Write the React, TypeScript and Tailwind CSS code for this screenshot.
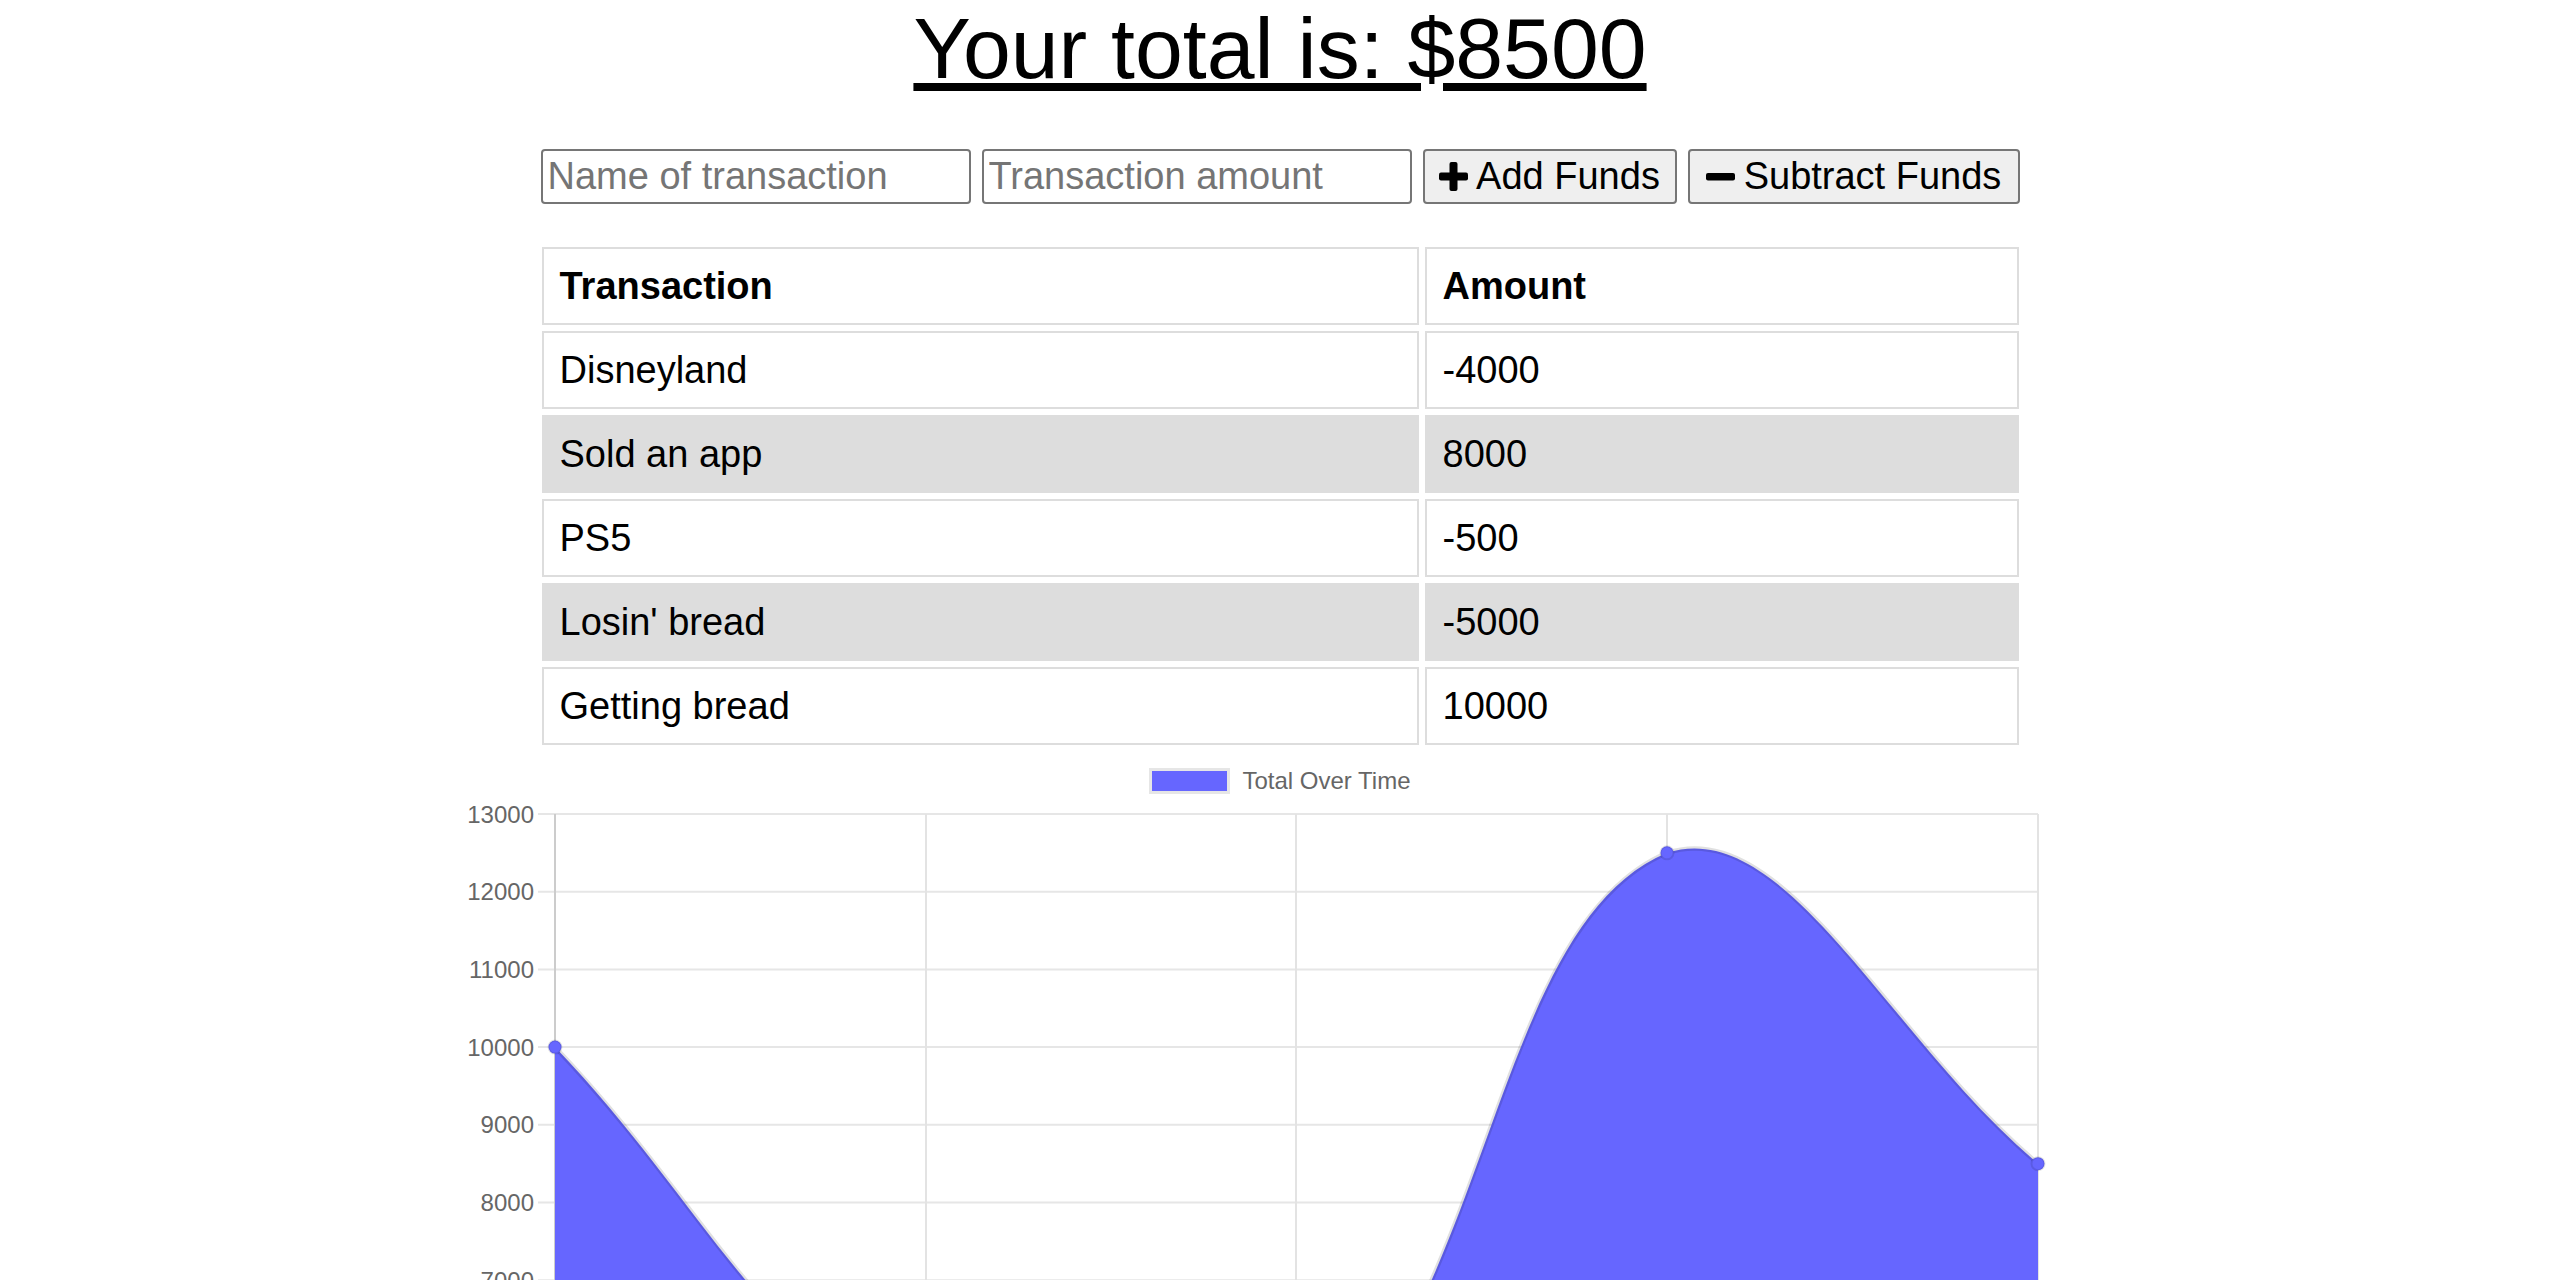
import React from 'react';

const transactions = [
  { name: 'Disneyland', value: -4000 },
  { name: 'Sold an app', value: 8000 },
  { name: 'PS5', value: -500 },
  { name: "Losin' bread", value: -5000 },
  { name: 'Getting bread', value: 10000 },
];

// chart geometry, in page pixels
const TOP = 813;
const LEFT = 555;
const RIGHT = 2038;
const PER_THOUSAND = 77.7;
const BOTTOM = TOP + 9 * PER_THOUSAND;
const ticks = [13000, 12000, 11000, 10000, 9000, 8000, 7000, 6000, 5000, 4000];
const xs = [555, 926, 1296, 1667, 2038];

const yOf = (v: number) => TOP + ((13000 - v) / 1000) * PER_THOUSAND;

function buildCurve() {
  // running totals, oldest first
  const totals: number[] = [];
  let sum = 0;
  [...transactions].reverse().forEach((t) => {
    sum += t.value;
    totals.push(sum);
  });
  const pts = totals.map((v, i) => ({ x: xs[i], y: yOf(v) }));
  const tension = 0.4;
  const clampX = (x: number) => Math.min(Math.max(x, LEFT), RIGHT);
  const clampY = (y: number) => Math.min(Math.max(y, TOP), BOTTOM);
  const ctrl = pts.map((p, i) => {
    const prev = pts[i - 1] ?? p;
    const next = pts[i + 1] ?? p;
    const d01 = Math.hypot(p.x - prev.x, p.y - prev.y);
    const d12 = Math.hypot(next.x - p.x, next.y - p.y);
    const s01 = d01 + d12 === 0 ? 0 : d01 / (d01 + d12);
    const s12 = d01 + d12 === 0 ? 0 : d12 / (d01 + d12);
    const fa = tension * s01;
    const fb = tension * s12;
    return {
      px: clampX(p.x - fa * (next.x - prev.x)),
      py: clampY(p.y - fa * (next.y - prev.y)),
      nx: clampX(p.x + fb * (next.x - prev.x)),
      ny: clampY(p.y + fb * (next.y - prev.y)),
    };
  });
  let d = `M ${pts[0].x} ${pts[0].y}`;
  for (let i = 1; i < pts.length; i++) {
    d += ` C ${ctrl[i - 1].nx} ${ctrl[i - 1].ny} ${ctrl[i].px} ${ctrl[i].py} ${pts[i].x} ${pts[i].y}`;
  }
  const fill = `${d} L ${RIGHT} ${BOTTOM} L ${LEFT} ${BOTTOM} Z`;
  return { pts, d, fill };
}

function PlusIcon() {
  return (
    <svg width="29" height="29" viewBox="0 0 29 29" className="shrink-0">
      <rect x="10.5" y="0" width="8" height="29" rx="2" fill="#000" />
      <rect x="0" y="10.5" width="29" height="8" rx="2" fill="#000" />
    </svg>
  );
}

function MinusIcon() {
  return (
    <svg width="29" height="29" viewBox="0 0 29 29" className="shrink-0">
      <rect x="0" y="11" width="29" height="7.5" rx="2" fill="#000" />
    </svg>
  );
}

function Chart() {
  const { pts, d, fill } = buildCurve();
  return (
    <svg width="2560" height="720" viewBox="0 794 2560 720" className="block shrink-0">
      {ticks.map((t) => (
        <g key={t}>
          <line x1={538} x2={RIGHT} y1={yOf(t)} y2={yOf(t)} stroke="#e6e6e6" strokeWidth="2" />
          <text
            x={534}
            y={yOf(t)}
            textAnchor="end"
            dominantBaseline="central"
            fontSize="24"
            fill="#666"
            fontFamily="'Liberation Sans', Arial, sans-serif"
          >
            {t}
          </text>
        </g>
      ))}
      {xs.slice(1).map((x) => (
        <line key={x} x1={x} x2={x} y1={TOP} y2={BOTTOM + 16} stroke="#e3e3e3" strokeWidth="2" />
      ))}
      <line x1={LEFT} x2={LEFT} y1={TOP} y2={BOTTOM + 16} stroke="#cccccc" strokeWidth="2" />
      <path d={fill} fill="#6666ff" />
      <path d={d} fill="none" stroke="rgba(0,0,0,0.12)" strokeWidth="4.5" />
      {pts.map((p) => (
        <circle key={p.x} cx={p.x} cy={p.y} r="6.5" fill="#6666ff" stroke="rgba(0,0,0,0.1)" strokeWidth="2" />
      ))}
    </svg>
  );
}

export default function App() {
  return (
    <div className="min-h-screen bg-white text-black font-['Liberation_Sans',Arial,sans-serif] flex flex-col items-center overflow-hidden">
      <h1 className="pt-[5px] text-[86px] leading-none font-normal underline">
        Your total is: $8500
      </h1>

      <div className="mt-[58px] flex items-center gap-[11px]">
        <input
          type="text"
          placeholder="Name of transaction"
          className="w-[430px] h-[55px] px-[5px] border-2 border-[#767676] rounded-[4px] text-[38px] placeholder:text-[#757575] outline-none"
        />
        <input
          type="number"
          placeholder="Transaction amount"
          className="w-[430px] h-[55px] px-[5px] border-2 border-[#767676] rounded-[4px] text-[38px] placeholder:text-[#757575] outline-none"
        />
        <button className="w-[254px] h-[55px] flex items-center justify-center gap-[8px] bg-[#efefef] border-2 border-[#767676] rounded-[4px] text-[38px]">
          <PlusIcon />
          Add Funds
        </button>
        <button className="w-[332px] h-[55px] flex items-center justify-center gap-[9px] bg-[#efefef] border-2 border-[#767676] rounded-[4px] text-[38px]">
          <MinusIcon />
          Subtract Funds
        </button>
      </div>

      <table className="mt-[37px] border-separate border-spacing-[6px] table-fixed text-[38px] text-left">
        <thead>
          <tr>
            <th className="w-[877px] h-[78px] px-[16px] border-2 border-[#dddddd] font-bold">Transaction</th>
            <th className="w-[594px] h-[78px] px-[16px] border-2 border-[#dddddd] font-bold">Amount</th>
          </tr>
        </thead>
        <tbody>
          {transactions.map((t, i) => (
            <tr key={t.name} className={i % 2 === 1 ? 'bg-[#dddddd]' : ''}>
              <td className="h-[78px] px-[16px] border-2 border-[#dddddd]">{t.name}</td>
              <td className="h-[78px] px-[16px] border-2 border-[#dddddd]">{t.value}</td>
            </tr>
          ))}
        </tbody>
      </table>

      <div className="mt-[16px] h-[28px] flex items-center gap-[12px]">
        <div className="w-[81px] h-[26px] bg-[#6666ff] border-[3px] border-[#e6e6e6]" />
        <span className="text-[24px] leading-none text-[#666666]">Total Over Time</span>
      </div>

      <Chart />
    </div>
  );
}
